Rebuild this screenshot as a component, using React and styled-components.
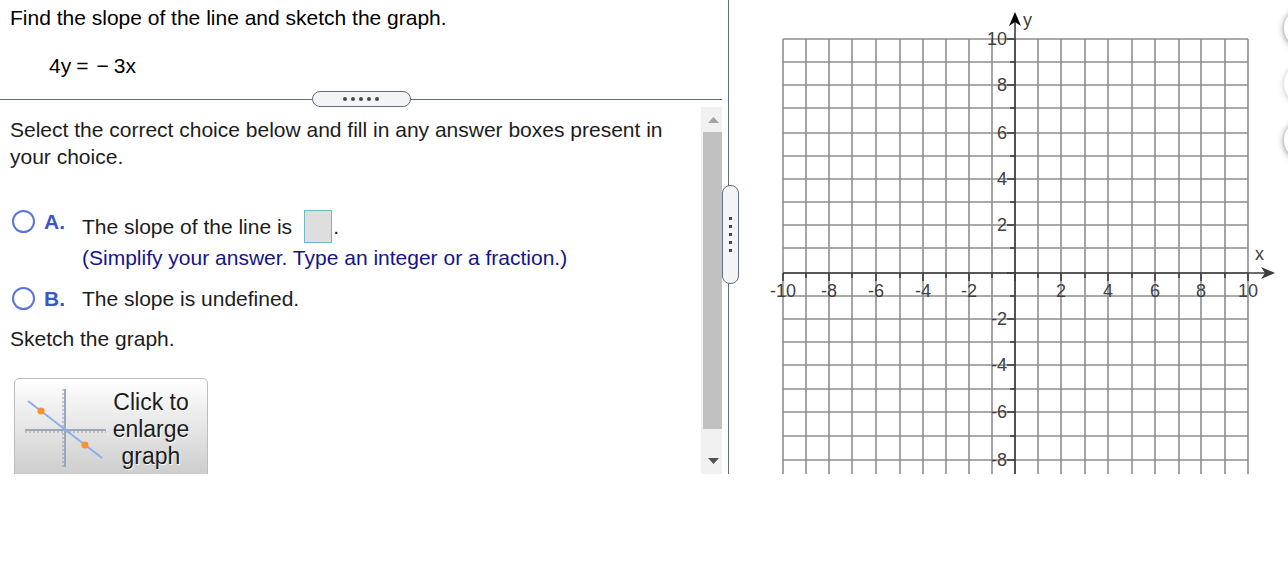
import React, { useState } from 'react';
import styled, { createGlobalStyle } from 'styled-components';

const COLUMNS = [18, 41, 64, 87, 111, 135, 158, 181, 204, 227, 250, 273, 296, 320, 343, 367, 390, 414, 436, 460, 483];
const ROWS = [39, 62, 85, 108, 133, 156, 179, 202, 225, 248, 273, 296, 319, 342, 365, 389, 412, 436, 460];
const ORIGIN_X = COLUMNS[10];
const ORIGIN_Y = ROWS[10];

const Graph = () => (
  <StGraph viewBox="0 0 520 480" role="img" aria-label="Coordinate grid">
    <g stroke="#8e8e8e" strokeWidth="1.6">
      {COLUMNS.map((x) => (
        <line key={x} x1={x} x2={x} y1={ROWS[0]} y2="480" />
      ))}
      {ROWS.map((y) => (
        <line key={y} x1={COLUMNS[0]} x2={COLUMNS[20]} y1={y} y2={y} />
      ))}
    </g>
    <g stroke="#3c3c3c" strokeWidth="1.6">
      <line x1={COLUMNS[0]} x2="500" y1={ORIGIN_Y} y2={ORIGIN_Y} />
      <line x1={ORIGIN_X} x2={ORIGIN_X} y1="22" y2="480" />
      {COLUMNS.map((x, i) => (
        <line key={x} x1={x} x2={x} y1={ORIGIN_Y} y2={ORIGIN_Y + (i % 2 ? 5 : 8)} />
      ))}
      {ROWS.map((y, i) => (
        <line key={y} x1={ORIGIN_X - (i % 2 ? 5 : 8)} x2={ORIGIN_X} y1={y} y2={y} />
      ))}
    </g>
    <path d="M250 12 L256 26 L250 22 L244 26 Z" fill="#000" />
    <path d="M510 273 L496 267 L500 273 L496 279 Z" fill="#3c3c3c" />
    {COLUMNS.map((x, i) => {
      const value = i - 10;
      if (value % 2 || value === 0) return null;
      return (
        <StAxisText key={x} x={x} y="297" textAnchor="middle">
          {value}
        </StAxisText>
      );
    })}
    {ROWS.map((y, i) => {
      const value = 10 - i;
      if (value % 2 || value === 0) return null;
      return (
        <StAxisText key={y} x="242" y={y + 6} textAnchor="end">
          {value}
        </StAxisText>
      );
    })}
    <StAxisText x="258" y="26">y</StAxisText>
    <StAxisText x="490" y="260">x</StAxisText>
  </StGraph>
);

const GraphThumbnail = () => (
  <svg width="82" height="80" viewBox="0 0 82 80" aria-hidden="true">
    <g stroke="#9aa8b8" strokeWidth="2">
      <path d="M0 41 H81 M40 0 V78" />
      <path d="M0 43 H81" strokeDasharray="2 2" opacity="0.6" />
      <path d="M38 0 V78" strokeDasharray="2 2" opacity="0.6" />
    </g>
    <path d="M3 12 L77 69" stroke="#8aaef0" strokeWidth="2" />
    <circle cx="16" cy="22" r="3.6" fill="#f7932a" />
    <circle cx="60" cy="56" r="3.6" fill="#f7932a" />
  </svg>
);

const App = () => {
  const [choice, setChoice] = useState('');
  const [slope, setSlope] = useState('');

  const choiceHandler = (e) => setChoice(e.target.value);

  return (
    <>
      <GlobalStyle />
      <StWorkspace>
        <StLeft>
          <StQuestion>
            <p>Find the slope of the line and sketch the graph.</p>
            <StEquation>
              <span>4y</span>
              <span>=</span>
              <StMinus>−</StMinus>
              <span>3x</span>
            </StEquation>
          </StQuestion>
          <StRowDivider>
            <StHandle type="button" aria-label="Resize question">
              {[1, 2, 3, 4, 5].map((dot) => (
                <StDot key={dot} />
              ))}
            </StHandle>
          </StRowDivider>
          <StAnswerPane>
            <StAnswer>
              <p>Select the correct choice below and fill in any answer boxes present in your choice.</p>
              <StChoices>
                <StChoice $tall>
                  <StRadio id="choice-a" type="radio" name="choice" value="A" checked={choice === 'A'} onChange={choiceHandler} />
                  <StLetter htmlFor="choice-a">A.</StLetter>
                  <StChoiceBody>
                    <StSlopeLine>
                      <label htmlFor="slope">The slope of the line is</label>
                      <StSlopeInput id="slope" value={slope} onChange={(e) => setSlope(e.target.value)} />
                      <span>.</span>
                    </StSlopeLine>
                    <StHint>(Simplify your answer. Type an integer or a fraction.)</StHint>
                  </StChoiceBody>
                </StChoice>
                <StChoice>
                  <StRadio id="choice-b" type="radio" name="choice" value="B" checked={choice === 'B'} onChange={choiceHandler} />
                  <StLetter htmlFor="choice-b">B.</StLetter>
                  <StChoiceBody>The slope is undefined.</StChoiceBody>
                </StChoice>
              </StChoices>
              <p>Sketch the graph.</p>
              <StEnlarge type="button">
                <GraphThumbnail />
                <span>Click to enlarge graph</span>
              </StEnlarge>
            </StAnswer>
            <StScrollbar>
              <StArrow viewBox="0 0 11 6">
                <path d="M5.5 0 L11 6 H0 Z" fill="#a3a3a3" />
              </StArrow>
              <StThumb />
              <StArrow viewBox="0 0 11 6">
                <path d="M0 0 H11 L5.5 6 Z" fill="#505050" />
              </StArrow>
            </StScrollbar>
          </StAnswerPane>
        </StLeft>
        <StColumnDivider>
          <StHandle type="button" $vertical aria-label="Resize graph">
            {[1, 2, 3, 4, 5].map((dot) => (
              <StDot key={dot} $square />
            ))}
          </StHandle>
        </StColumnDivider>
        <StGraphPane>
          <Graph />
          <StTools>
            <StTool type="button" aria-label="Zoom in" />
            <StTool type="button" aria-label="Zoom out" $faint />
            <StTool type="button" aria-label="Open graph" />
          </StTools>
        </StGraphPane>
      </StWorkspace>
    </>
  );
};

export default App;

const GlobalStyle = createGlobalStyle`
  * {
    box-sizing: border-box;
  }

  body {
    margin: 0;
    background: #fff;
    color: #000;
    font: 21px/27px "Liberation Sans", Arial, sans-serif;
    overflow: hidden;
  }

  p {
    margin: 0;
  }
`;

const StWorkspace = styled.main`
  display: flex;
  height: calc(100vh - 93px);
  overflow: hidden;
`;

const StLeft = styled.section`
  flex: 722 1 0;
  min-width: 0;
  display: flex;
  flex-direction: column;
`;

const StQuestion = styled.div`
  padding: 4px 10px 12px;
`;

const StEquation = styled.div`
  display: flex;
  padding: 21px 39px 0;
  gap: 5px;
`;

const StMinus = styled.span`
  padding-left: 3px;
`;

const StRowDivider = styled.div`
  display: flex;
  justify-content: center;
  align-items: center;
  height: 16px;
  background: linear-gradient(#5d6f80, #5d6f80) center / 100% 1px no-repeat;
`;

const StHandle = styled.button`
  display: flex;
  flex-direction: ${({ $vertical }) => ($vertical ? 'column' : 'row')};
  justify-content: center;
  align-items: center;
  gap: ${({ $vertical }) => ($vertical ? '5px' : '4px')};
  width: ${({ $vertical }) => ($vertical ? '17px' : '99px')};
  height: ${({ $vertical }) => ($vertical ? '99px' : '16px')};
  padding: 0;
  border: 1px solid #5d6f80;
  border-radius: 8px;
  background: #f2f4f6;
  cursor: ${({ $vertical }) => ($vertical ? 'col-resize' : 'row-resize')};
`;

const StDot = styled.span`
  width: ${({ $square }) => ($square ? '3px' : '4px')};
  height: ${({ $square }) => ($square ? '3px' : '4px')};
  border-radius: ${({ $square }) => ($square ? '0' : '2px')};
  background: #4a4a4a;
`;

const StAnswerPane = styled.div`
  flex: 1;
  min-height: 0;
  display: flex;
`;

const StAnswer = styled.div`
  flex: 1;
  min-width: 0;
  padding: 9px 10px 0;
  overflow: hidden;
  color: #1c1c1c;
`;

const StChoices = styled.div`
  display: grid;
  gap: 14px;
  padding: 40px 0 13px 2px;
`;

const StChoice = styled.div`
  display: flex;
  align-items: ${({ $tall }) => ($tall ? 'flex-start' : 'center')};
`;

const StRadio = styled.input`
  appearance: none;
  flex: none;
  width: 23px;
  height: 23px;
  margin: 0;
  border: 2px solid #5b74d8;
  border-radius: 50%;

  &:checked {
    background: radial-gradient(#3a57c9 45%, #fff 50%);
  }
`;

const StLetter = styled.label`
  width: 38px;
  margin-left: 9px;
  color: #3a57c9;
  font-weight: bold;
  line-height: 23px;
`;

const StChoiceBody = styled.div`
  flex: 1;
`;

const StSlopeLine = styled.div`
  display: flex;
  align-items: center;

  span {
    margin-left: 1px;
  }
`;

const StSlopeInput = styled.input`
  width: 28px;
  height: 33px;
  margin-left: 12px;
  padding: 0 4px;
  border: 1px solid #6fb6c6;
  background: #dedede;
  font: inherit;
`;

const StHint = styled.p`
  padding-top: 1px;
  color: #14148c;
`;

const StEnlarge = styled.button`
  display: flex;
  align-items: flex-start;
  width: 194px;
  height: 108px;
  margin: 26px 0 0 4px;
  padding: 10px 12px 0 10px;
  border: 1px solid #bdbdbd;
  border-radius: 5px;
  background: linear-gradient(#fff, #c8c8c8);
  color: #1c1c1c;
  font: 23px/27px "Liberation Sans", Arial, sans-serif;
  text-shadow: 1px 1px 1px #fff;

  svg {
    flex: none;
  }

  span {
    flex: 1;
  }
`;

const StScrollbar = styled.div`
  flex: none;
  display: flex;
  flex-direction: column;
  align-items: center;
  gap: 9px;
  width: 21px;
  padding: 10px 0;
  background: #f1f1f1;
`;

const StArrow = styled.svg`
  flex: none;
  width: 11px;
  height: 6px;
  margin-left: 4px;
`;

const StThumb = styled.div`
  align-self: stretch;
  flex: 1;
  margin: 0 0 20px 2px;
  background: #c1c1c1;
`;

const StColumnDivider = styled.div`
  flex: none;
  display: flex;
  align-items: center;
  width: 17px;
  padding-bottom: 6px;
  background: linear-gradient(#5d6f80, #5d6f80) 6px 0 / 1px 100% no-repeat;
`;

const StGraphPane = styled.section`
  position: relative;
  flex: 549 1 0;
  min-width: 0;
  overflow: hidden;
`;

const StGraph = styled.svg`
  display: block;
  width: 520px;
  height: 480px;
  margin-left: 26px;
`;

const StAxisText = styled.text`
  fill: #404040;
  font-size: 18px;
`;

const StTools = styled.div`
  position: absolute;
  top: 8px;
  right: -36px;
  display: grid;
  gap: 16px;
`;

const StTool = styled.button`
  width: 40px;
  height: 40px;
  padding: 0;
  border: 0;
  border-radius: 50%;
  background: #fff;
  box-shadow: 0 1px 6px ${({ $faint }) => ($faint ? 'rgba(0, 0, 0, 0.25)' : 'rgba(0, 0, 0, 0.5)')};
`;
